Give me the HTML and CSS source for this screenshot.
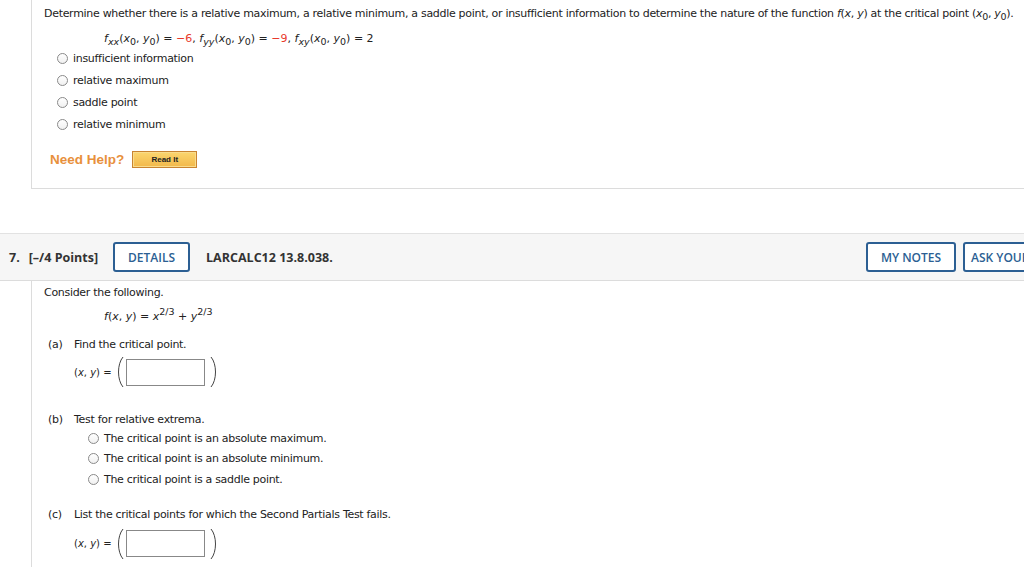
FILE: index.html
```html
<!DOCTYPE html>
<html>
<head>
<meta charset="utf-8">
<link rel="stylesheet" href="styles.css">
</head>
<body>
<div class="q1">
  <p class="lead">Determine whether there is a relative maximum, a relative minimum, a saddle point, or insufficient information to determine the nature of the function <i>f</i>(<i>x</i>, <i>y</i>) at the critical point (<i>x</i><sub>0</sub>, <i>y</i><sub>0</sub>).</p>
  <p class="formula"><i>f</i><sub><i>xx</i></sub>(<i>x</i><sub>0</sub>, <i>y</i><sub>0</sub>) = <span class="red">&minus;6</span>, <i>f</i><sub><i>yy</i></sub>(<i>x</i><sub>0</sub>, <i>y</i><sub>0</sub>) = <span class="red">&minus;9</span>, <i>f</i><sub><i>xy</i></sub>(<i>x</i><sub>0</sub>, <i>y</i><sub>0</sub>) = 2</p>
  <ul class="opts">
    <li><span class="radio"></span>insufficient information</li>
    <li><span class="radio"></span>relative maximum</li>
    <li><span class="radio"></span>saddle point</li>
    <li><span class="radio"></span>relative minimum</li>
  </ul>
  <div class="help"><span class="need">Need Help?</span><span class="readit">Read It</span></div>
</div>
<div class="header">
  <span class="num">7.</span>
  <span class="pts">[&ndash;/4 Points]</span>
  <span class="btn details">DETAILS</span>
  <span class="code">LARCALC12 13.8.038.</span>
  <span class="spacer"></span>
  <span class="btn notes">MY NOTES</span>
  <span class="btn ask">ASK YOUR TEACHER</span>
</div>
<div class="q2">
  <p class="consider">Consider the following.</p>
  <p class="fx"><i>f</i>(<i>x</i>, <i>y</i>) = <i>x</i><sup>2/3</sup> + <i>y</i><sup>2/3</sup></p>
  <div class="part"><span class="lbl">(a)</span><span>Find the critical point.</span></div>
  <div class="answer">
    <span class="xy">(<i>x</i>, <i>y</i>) =</span>
    <svg class="paren" width="10" height="32" viewBox="0 0 10 32"><path d="M8 1 C2 8 2 24 8 31" fill="none" stroke="#444" stroke-width="1"/></svg>
    <span class="box"></span>
    <svg class="paren" width="10" height="32" viewBox="0 0 10 32"><path d="M2 1 C8 8 8 24 2 31" fill="none" stroke="#444" stroke-width="1"/></svg>
  </div>
  <div class="part partb"><span class="lbl">(b)</span><span>Test for relative extrema.</span></div>
  <ul class="opts2">
    <li><span class="radio"></span>The critical point is an absolute maximum.</li>
    <li><span class="radio"></span>The critical point is an absolute minimum.</li>
    <li><span class="radio"></span>The critical point is a saddle point.</li>
  </ul>
  <div class="part partc"><span class="lbl">(c)</span><span>List the critical points for which the Second Partials Test fails.</span></div>
  <div class="answer answer2">
    <span class="xy">(<i>x</i>, <i>y</i>) =</span>
    <svg class="paren" width="10" height="32" viewBox="0 0 10 32"><path d="M8 1 C2 8 2 24 8 31" fill="none" stroke="#444" stroke-width="1"/></svg>
    <span class="box"></span>
    <svg class="paren" width="10" height="32" viewBox="0 0 10 32"><path d="M2 1 C8 8 8 24 2 31" fill="none" stroke="#444" stroke-width="1"/></svg>
  </div>
</div>
</body>
</html>
```
FILE: styles.css
```css
html, body { margin: 0; padding: 0; background: #fff; }
body {
  font-family: "DejaVu Sans", Verdana, sans-serif;
  font-size: 11px;
  letter-spacing: -0.3px;
  color: #222;
  width: 1024px;
  height: 567px;
  overflow: hidden;
}
p { margin: 0; }
i { font-style: italic; }
sub, sup { font-size: 9.5px; line-height: 0; }
sub { vertical-align: -3px; }
sup { vertical-align: 5px; }
.red { color: #e8392b; }

.q1 {
  margin-left: 31px;
  border-left: 1px solid #dcdcdc;
  border-bottom: 1px solid #dcdcdc;
  height: 189px;
  box-sizing: border-box;
  padding: 6px 0 0 12px;
}
.lead { line-height: 16px; white-space: nowrap; }
.formula { margin: 10px 0 0 60px; line-height: 14px; letter-spacing: 0; }
.opts { list-style: none; margin: 1px 0 0 13px; padding: 0; }
.opts li { height: 22px; display: flex; align-items: center; }
.radio {
  display: inline-block;
  width: 9px; height: 9px;
  border: 1px solid #8a8a8a;
  border-radius: 50%;
  background: linear-gradient(#ffffff, #f0f0f0);
  margin-right: 5px;
}
.help { display: flex; align-items: center; margin: 16px 0 0 6px; letter-spacing: 0; }
.need {
  font-family: "Liberation Sans", Arial, sans-serif;
  font-weight: bold;
  font-size: 13.5px;
  color: #e8903c;
  margin-right: 8px;
}
.readit {
  font-family: "Liberation Sans", Arial, sans-serif;
  font-weight: bold;
  font-size: 8px;
  color: #222;
  width: 63px; height: 15px;
  border: 1px solid #c98430;
  box-shadow: inset 0 0 0 1px #f9dc8c;
  background: linear-gradient(#fbd66f, #f2b84a);
  display: flex; align-items: center; justify-content: center;
}

.header {
  margin-top: 44px;
  height: 48px;
  box-sizing: border-box;
  background: #f6f6f6;
  border-top: 1px solid #e2e2e2;
  border-bottom: 1px solid #dcdcdc;
  display: flex;
  align-items: center;
  font-family: "Open Sans", sans-serif;
  font-weight: bold;
  font-size: 12.5px;
  letter-spacing: 0;
  color: #333;
  padding-left: 9px;
  white-space: nowrap;
}
.num { margin-right: 9px; }
.pts { margin-right: 16px; }
.btn {
  display: flex; align-items: center; justify-content: center;
  height: 30px;
  box-sizing: border-box;
  border: 2px solid #2c5f93;
  border-radius: 3px;
  background: #fff;
  color: #2c5f93;
  font-weight: 600;
  font-size: 12px;
}
.details { width: 77px; margin-right: 16px; margin-left: -1px; }
.spacer { flex: 1; }
.notes { width: 90px; margin-right: 7px; }
.ask { width: 130px; flex-shrink: 0; margin-right: -69px; }

.q2 {
  margin-left: 31px;
  border-left: 1px solid #dcdcdc;
  height: 300px;
  padding: 4px 0 0 12px;
}
.consider { line-height: 16px; }
.fx { margin: 8px 0 0 60px; line-height: 16px; letter-spacing: 0; }
.part { display: flex; margin: 12px 0 0 4px; line-height: 16px; }
.lbl { width: 26px; }
.answer { display: flex; align-items: center; margin: 3px 0 0 30px; height: 32px; }
.answer2 { margin-top: 5px; }
.xy { font-size: 10px; margin-right: 3px; letter-spacing: 0; }
.box {
  width: 77px; height: 25px;
  border: 1px solid #888;
  margin: 0 4px 0 1px;
}
.partb { margin-top: 24px; }
.opts2 { list-style: none; margin: 0 0 0 44px; padding: 0; }
.opts2 li { height: 20.5px; display: flex; align-items: center; }
.partc { margin-top: 17px; }
```
